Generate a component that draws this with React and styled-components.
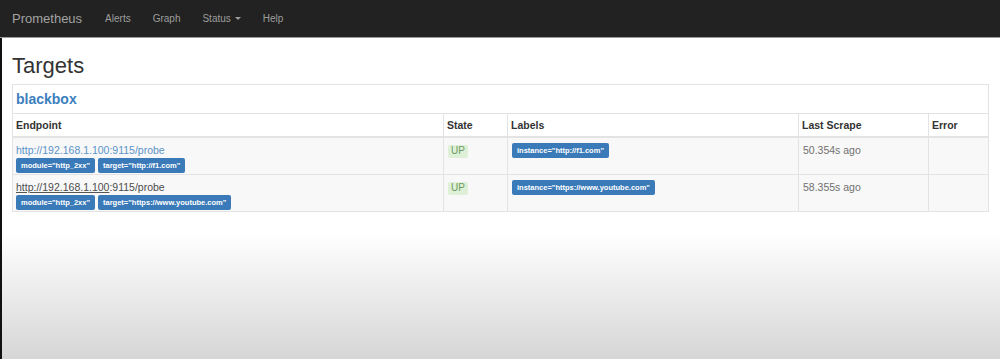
import React from "react";
import styled, { createGlobalStyle } from "styled-components";

const Global = createGlobalStyle`
  html {
    height: 100%;
    background: linear-gradient(to bottom, #ffffff 0px, #ffffff 232px, #d6d6d6 359px);
  }
  body {
    margin: 0;
    min-height: 100%;
    font-family: "Liberation Sans", Arial, sans-serif;
    color: #333;
  }
  * { box-sizing: border-box; }
`;

const Navbar = styled.nav`
  height: 38px;
  background: #222;
  border-bottom: 1px solid #9a9a9a;
  display: flex;
  align-items: center;
  padding-left: 12px;
`;

const Brand = styled.a`
  font-size: 13px;
  color: #a3a3a3;
  margin-right: 12px;
  text-decoration: none;
`;

const NavLink = styled.a`
  font-size: 10px;
  color: #9d9d9d;
  padding: 0 11px;
  display: flex;
  align-items: center;
  gap: 4px;
  text-decoration: none;
`;

const Caret = styled.span`
  width: 0;
  height: 0;
  border-left: 3px solid transparent;
  border-right: 3px solid transparent;
  border-top: 3px solid #9d9d9d;
`;

const Main = styled.main`
  min-height: calc(100vh - 38px);
  border-left: 2px solid #111;
  padding: 16px 10px 0 10px;
`;

const Title = styled.h2`
  margin: 0 0 6px 0;
  font-size: 22px;
  line-height: 24px;
  font-weight: 400;
  color: #333;
`;

const Table = styled.table`
  width: 976px;
  table-layout: fixed;
  border-collapse: collapse;
  border: 1px solid #e3e3e3;
`;

const JobCell = styled.th`
  text-align: left;
  padding: 6px 3px 5px;
  font-size: 14px;
  line-height: 17px;
  font-weight: 700;
  color: #3b7fbe;
  background: #fff;
  border-bottom: 1px solid #e3e3e3;
`;

const Th = styled.th`
  text-align: left;
  padding: 4px 3px;
  font-size: 10.5px;
  line-height: 14px;
  font-weight: 700;
  color: #333;
  background: #fff;
  border-left: 1px solid #e3e3e3;
  border-bottom: 2px solid #e3e3e3;
  &:first-child { border-left: none; }
`;

const Td = styled.td`
  vertical-align: top;
  padding: 5px 3px 1px 4px;
  font-size: 10.5px;
  line-height: 14px;
  background: #f8f8f8;
  border-left: 1px solid #e3e3e3;
  border-top: 1px solid #e3e3e3;
  color: #707070;
  &:first-child { border-left: none; padding-left: 3px; }
`;

const EndpointLink = styled.a`
  display: block;
  color: ${(p) => (p.$hover ? "#4d4d4d" : "#5b93c7")};
  text-decoration: none;
  font-size: 10.5px;
  line-height: 15px;
`;

const Under = styled.span`
  text-decoration: underline;
  text-decoration-color: #555;
`;

const LabelRow = styled.div`
  display: flex;
  gap: 3px;
`;

const Label = styled.span`
  display: inline-flex;
  align-items: center;
  height: 15px;
  padding: 0 5px;
  background: #3a7ab9;
  color: #fff;
  font-size: 7.5px;
  font-weight: 700;
  border-radius: 2px;
  white-space: nowrap;
`;

const Up = styled.span`
  display: inline-flex;
  align-items: center;
  height: 13px;
  margin-top: 1px;
  padding: 0 3px;
  background: #dff0d8;
  color: #6b9a5e;
  font-size: 10px;
  border-radius: 2px;
`;

const targets = [
  { target: "http://f1.com", instance: "http://f1.com", scrape: "50.354s ago" },
  { target: "https://www.youtube.com", instance: "https://www.youtube.com", scrape: "58.355s ago", hover: true },
];

export default function App() {
  return (
    <>
      <Global />
      <Navbar>
        <Brand>Prometheus</Brand>
        <NavLink>Alerts</NavLink>
        <NavLink>Graph</NavLink>
        <NavLink>
          Status <Caret />
        </NavLink>
        <NavLink>Help</NavLink>
      </Navbar>
      <Main>
        <Title>Targets</Title>
        <Table>
          <colgroup>
            <col style={{ width: 431 }} />
            <col style={{ width: 64 }} />
            <col style={{ width: 291 }} />
            <col style={{ width: 130 }} />
            <col style={{ width: 60 }} />
          </colgroup>
          <thead>
            <tr>
              <JobCell colSpan={5}>blackbox</JobCell>
            </tr>
            <tr>
              <Th>Endpoint</Th>
              <Th>State</Th>
              <Th>Labels</Th>
              <Th>Last Scrape</Th>
              <Th>Error</Th>
            </tr>
          </thead>
          <tbody>
            {targets.map((t) => (
              <tr key={t.target}>
                <Td>
                  <EndpointLink $hover={t.hover}>
                    {t.hover ? (
                      <>
                        <Under>http://192.168.1.100</Under>:9115/probe
                      </>
                    ) : (
                      "http://192.168.1.100:9115/probe"
                    )}
                  </EndpointLink>
                  <LabelRow>
                    <Label>module="http_2xx"</Label>
                    <Label>target="{t.target}"</Label>
                  </LabelRow>
                </Td>
                <Td>
                  <Up>UP</Up>
                </Td>
                <Td>
                  <LabelRow>
                    <Label>instance="{t.instance}"</Label>
                  </LabelRow>
                </Td>
                <Td>{t.scrape}</Td>
                <Td></Td>
              </tr>
            ))}
          </tbody>
        </Table>
      </Main>
    </>
  );
}
